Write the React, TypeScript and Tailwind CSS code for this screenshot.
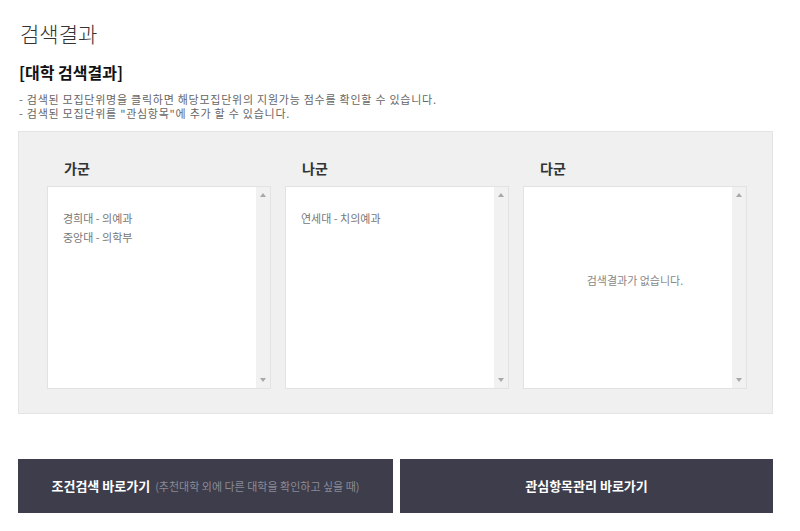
const groups = [
  { name: "가군", items: ["경희대 - 의예과", "중앙대 - 의학부"] },
  { name: "나군", items: ["연세대 - 치의예과"] },
  { name: "다군", items: [] as string[] },
];

function FakeScrollbar() {
  return (
    <div className="absolute right-0 top-0 bottom-0 w-[14px] bg-[#f1f1f1] flex flex-col items-center justify-between py-[6px]">
      <svg width="6" height="4" viewBox="0 0 6 4">
        <path d="M0 4 L3 0 L6 4 Z" fill="#a8a8a8" />
      </svg>
      <svg width="6" height="4" viewBox="0 0 6 4">
        <path d="M0 0 L3 4 L6 0 Z" fill="#a8a8a8" />
      </svg>
    </div>
  );
}

export default function App() {
  return (
    <div
      className="w-[800px] h-[531px] bg-white overflow-hidden"
      style={{ fontFamily: '"Noto Sans CJK KR", "Noto Sans", sans-serif' }}
    >
      <div className="ml-[18px] w-[755px]">
        <h1 className="pt-[18px] pl-[2px] text-[21px] leading-[30px] font-light text-[#333]">
          검색결과
        </h1>
        <h2 className="mt-[13px] pl-[1px] text-[16px] leading-[22px] font-bold text-[#111]">
          [대학 검색결과]
        </h2>
        <div className="mt-[9px] pl-[1px] text-[11px] leading-[14px] text-[#666] tracking-[0.75px]">
          <p>- 검색된 모집단위명을 클릭하면 해당모집단위의 지원가능 점수를 확인할 수 있습니다.</p>
          <p>- 검색된 모집단위를 "관심항목"에 추가 할 수 있습니다.</p>
        </div>

        {/* result panel */}
        <div className="mt-[11px] h-[283px] border border-[#e4e4e4] bg-[#f0f0f0] pt-[26px] pl-[28px] pr-[25px] grid grid-cols-3 gap-[14px]">
          {groups.map((g) => (
            <div key={g.name} className="flex flex-col">
              <div className="pl-[17px] text-[14px] leading-[20px] font-bold text-[#333] mb-[8px]">
                {g.name}
              </div>
              <div className="relative h-[203px] border border-[#e2e2e2] bg-white">
                {g.items.length > 0 ? (
                  <ul className="pt-[22px] pl-[15px] text-[11px] leading-[19px] text-[#777]">
                    {g.items.map((item) => (
                      <li key={item}>{item}</li>
                    ))}
                  </ul>
                ) : (
                  <p className="pt-[84px] text-center text-[11px] leading-[19px] text-[#888]">
                    검색결과가 없습니다.
                  </p>
                )}
                <FakeScrollbar />
              </div>
            </div>
          ))}
        </div>

        {/* buttons */}
        <div className="mt-[45px] flex gap-[7px]">
          <button
            type="button"
            className="w-[375px] h-[54px] bg-[#3d3d4b] flex items-center justify-center gap-[5px]"
          >
            <span className="text-[13px] font-bold text-white">조건검색 바로가기</span>
            <span className="text-[11px] text-[#8b8b97]">(추천대학 외에 다른 대학을 확인하고 싶을 때)</span>
          </button>
          <button
            type="button"
            className="w-[373px] h-[54px] bg-[#3d3d4b] flex items-center justify-center"
          >
            <span className="text-[13px] font-bold text-white">관심항목관리 바로가기</span>
          </button>
        </div>
      </div>
    </div>
  );
}
